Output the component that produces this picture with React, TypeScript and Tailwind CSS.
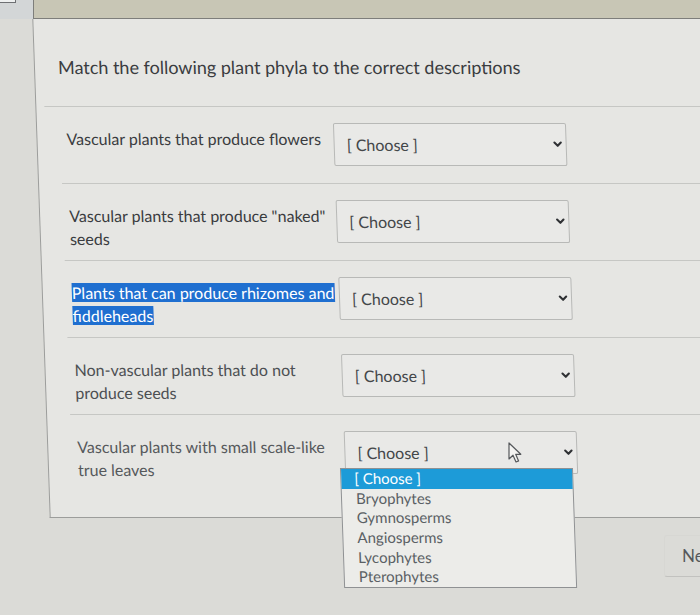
const options = ['[ Choose ]', 'Bryophytes', 'Gymnosperms', 'Angiosperms', 'Lycophytes', 'Pterophytes']

type Row = {
  lines: string[]
  tone: string
  highlighted?: boolean
}

const rows: Row[] = [
  { lines: ['Vascular plants that produce flowers'], tone: 'text-[#3a3c3f]' },
  { lines: ['Vascular plants that produce "naked"', 'seeds'], tone: 'text-[#3a3c3f]' },
  { lines: ['Plants that can produce rhizomes and', 'fiddleheads'], tone: 'text-white', highlighted: true },
  { lines: ['Non-vascular plants that do not', 'produce seeds'], tone: 'text-[#4d5053]' },
  { lines: ['Vascular plants with small scale-like', 'true leaves'], tone: 'text-[#56595c]' },
]

function Chevron() {
  return (
    <svg width="10" height="7" viewBox="0 0 10 7" className="shrink-0">
      <polyline points="1.8,1.6 5,4.8 8.2,1.6" fill="none" stroke="#2f3134" strokeWidth="2.1" strokeLinecap="round" strokeLinejoin="round" />
    </svg>
  )
}

function ChooseSelect({ open }: { open?: boolean }) {
  return (
    <div className="relative h-[43px] w-[233px] shrink-0">
      <div className="flex h-full items-center justify-between rounded-[2px] border border-[#b8b9b7] bg-[#e9e9e7] pr-[3px] pl-[12px]">
        <span className="text-[16px] text-[#44474a]">[ Choose ]</span>
        <Chevron />
      </div>
      {open && (
        <ul className="absolute top-[37px] left-[-5px] z-10 w-[233px] border border-[#8f9193] bg-[#ecece9]">
          {options.map((option, i) => (
            <li
              key={option}
              className={
                i === 0
                  ? 'h-[19.7px] bg-[#1d9bd8] pl-[13px] text-[15px] leading-[19.7px] text-white'
                  : 'h-[19.7px] pl-[14px] text-[15px] leading-[19.7px] text-[#5a6064]'
              }
            >
              {option}
            </li>
          ))}
        </ul>
      )}
    </div>
  )
}

export default function App() {
  return (
    <div className="relative h-[615px] w-[700px] overflow-hidden bg-[#dbdbd7] font-['Lato','Liberation_Sans',sans-serif]">
      <div className="flex h-[19px]">
        <div className="w-[33px] bg-[#d3d6d7]">
          <div className="h-[3px] w-[16px] border-r border-b border-[#6e7073] bg-[#eef0f0]" />
        </div>
        <div className="flex-1 border-b border-l border-[#7e7e7b] bg-[#c8c6b5]" />
      </div>

      <div className="ml-[41px] h-[499px] w-[720px] skew-x-2 border-b border-l border-[#9c9d9b] bg-[#e6e6e3]">
        <div className="ml-[8px] border-b border-[#c6c7c4] pt-[36px] pb-[27px] pl-[15px]">
          <h1 className="text-[18px] leading-[24px] text-[#3a3c3f]">
            Match the following plant phyla to the correct descriptions
          </h1>
        </div>

        <div className="ml-[23px]">
          {rows.map((row, i) => (
            <div
              key={row.lines[0]}
              className={
                i < rows.length - 1
                  ? 'flex h-[77px] items-start border-b border-[#c6c7c4] pt-[16px]'
                  : 'flex h-[77px] items-start pt-[16px]'
              }
            >
              <div className={`w-[273px] shrink-0 pt-[4px] pl-[6px] text-[16px] leading-[23px] ${row.tone}`}>
                {row.lines.map((line) => (
                  <div key={line}>
                    {row.highlighted ? <span className="bg-[#1f6fd0]">{line}</span> : line}
                  </div>
                ))}
              </div>
              <ChooseSelect open={i === rows.length - 1} />
            </div>
          ))}
        </div>
      </div>

      <div className="mt-[17px] ml-[664px] h-[42px] w-[90px] rounded-[3px] border border-[#d7d7d3] border-b-[#c2c2bf] pl-[17px] text-[17px] leading-[40px] text-[#55585b]">
        Next
      </div>

      <svg className="absolute top-[442px] left-[508px]" width="15" height="22" viewBox="0 0 15 22">
        <path d="M1 1 L1 17 L5 13.2 L8 20 L10.6 18.9 L7.7 12.3 L12.8 12.3 Z" fill="#f4f4f2" stroke="#55585b" strokeWidth="1.2" strokeLinejoin="round" />
      </svg>
    </div>
  )
}
